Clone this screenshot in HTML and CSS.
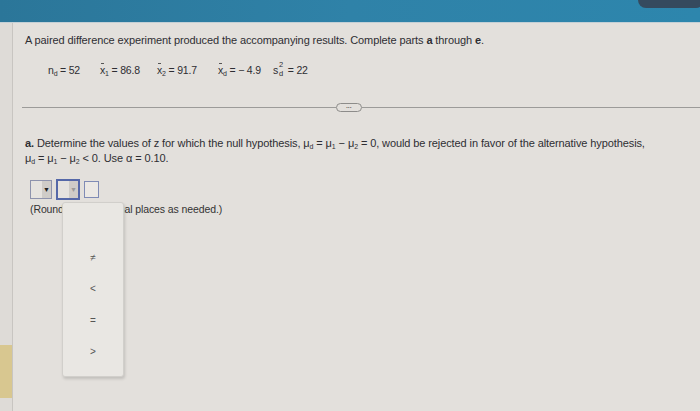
FILE: index.html
```html
<!DOCTYPE html>
<html>
<head>
<meta charset="utf-8">
<link rel="stylesheet" href="styles.css">
</head>
<body>
<div class="topbar"><div class="pill"></div></div>
<div class="main">
  <div class="sidebar"><div class="yellow"></div></div>
  <div class="content">
    <p class="intro">A paired difference experiment produced the accompanying results. Complete parts <b>a</b> through <b>e</b>.</p>
    <div class="vars">
      <span class="v v1">n<sub>d</sub> = 52</span>
      <span class="v v2"><span class="bar">x</span><sub>1</sub> = 86.8</span>
      <span class="v v3"><span class="bar">x</span><sub>2</sub> = 91.7</span>
      <span class="v v4"><span class="bar">x</span><sub>d</sub> = − 4.9</span>
      <span class="v v5">s<span class="supsub"><span class="sp">2</span><span class="sb">d</span></span> = 22</span>
    </div>
    <div class="divider"><span class="line"></span><span class="dots">•••</span><span class="line"></span></div>
    <p class="parta"><b>a.</b> Determine the values of z for which the null hypothesis, μ<sub>d</sub> = μ<sub>1</sub> − μ<sub>2</sub> = 0, would be rejected in favor of the alternative hypothesis,<br>μ<sub>d</sub> = μ<sub>1</sub> − μ<sub>2</sub> &lt; 0. Use α = 0.10.</p>
    <div class="answer">
      <div class="controls">
        <div class="sel"><span class="arrow">▼</span></div>
        <div class="sel active"><span class="arrow dim">▼</span></div>
        <div class="box"></div>
      </div>
      <p class="round">(Round to two decimal places as needed.)</p>
      <div class="menu">
        <div class="item">≠</div>
        <div class="item">&lt;</div>
        <div class="item">=</div>
        <div class="item">&gt;</div>
      </div>
    </div>
  </div>
</div>
</body>
</html>
```
FILE: styles.css
```css
html, body {
  margin: 0;
  padding: 0;
}
body {
  width: 700px;
  height: 411px;
  overflow: hidden;
  background: #e3e0dc;
  font-family: "Liberation Sans", Arial, sans-serif;
  color: #2e2e33;
}
.topbar {
  height: 22px;
  background: linear-gradient(90deg, #2b7699 0%, #2f82a8 50%, #2d86ad 100%);
  border-bottom: 1px solid #c4d0d6;
  display: flex;
  justify-content: flex-end;
  overflow: hidden;
}
.pill {
  width: 66px;
  height: 18px;
  margin-top: -10px;
  margin-right: -4px;
  border-radius: 8px;
  background: #354a5e;
}
.main {
  display: flex;
  height: 388px;
}
.sidebar {
  width: 12px;
  border-right: 1px solid #c8c5c1;
  background: #dedbd7;
  padding-top: 322px;
}
.yellow {
  height: 53px;
  background: #d8c790;
  margin-left: -2px;
}
.content {
  flex: 1;
  padding-left: 12px;
  position: relative;
}
.intro {
  margin: 10px 0 0 0;
  font-size: 11px;
  letter-spacing: -0.1px;
  line-height: 14px;
}
.vars {
  margin-top: 17px;
  padding-left: 23px;
  display: flex;
  font-size: 10.5px;
  height: 16px;
  align-items: baseline;
  letter-spacing: -0.2px;
}
.v sub {
  font-size: 7px;
  vertical-align: -2px;
}
.v1 { width: 52px; }
.v2 { width: 57px; }
.v3 { width: 61px; }
.v4 { width: 55px; }
.bar {
  position: relative;
}
.bar::before {
  content: "";
  position: absolute;
  left: 1px;
  top: -1px;
  width: 3px;
  height: 1px;
  background: #555;
}
.supsub {
  display: inline-block;
  position: relative;
  width: 6px;
  height: 10px;
  margin-left: 1px;
}
.sp, .sb {
  position: absolute;
  left: 0;
  font-size: 7.5px;
  line-height: 7px;
}
.sp { top: -3px; }
.sb { top: 6px; }
.divider {
  margin-top: 22px;
  margin-left: -3px;
  display: flex;
  align-items: center;
  height: 10px;
}
.line {
  height: 1px;
  background: #9c9b99;
}
.line:first-child { width: 314px; }
.line:last-child { flex: 1; }
.dots {
  width: 24px;
  height: 7px;
  border: 1px solid #8d8c8a;
  border-radius: 5px;
  font-size: 4px;
  line-height: 7px;
  text-align: center;
  color: #555;
  letter-spacing: 0.5px;
}
.parta {
  margin: 24px 0 0 0;
  font-size: 11px;
  line-height: 15px;
  letter-spacing: -0.1px;
}
.parta sub {
  font-size: 7px;
  vertical-align: -2px;
  line-height: 0;
}
.answer {
  position: relative;
  margin-top: 13px;
  padding-left: 5px;
}
.controls {
  display: flex;
  gap: 4px;
  align-items: center;
}
.sel {
  width: 20px;
  height: 17px;
  border: 1px solid #8e93ad;
  background: #e6e3df;
  display: flex;
  justify-content: flex-end;
}
.sel .arrow {
  width: 9px;
  background: #cfccc8;
  font-size: 7px;
  line-height: 17px;
  text-align: center;
  color: #222;
}
.sel .arrow.dim {
  color: #9a9a9a;
}
.sel.active {
  border: 2px solid #5568a8;
  width: 20px;
  height: 17px;
}
.box {
  width: 13px;
  height: 15px;
  border: 1px solid #7f8bb5;
  background: #ebe8e4;
}
.round {
  margin: 3px 0 0 0;
  font-size: 10.5px;
  color: #333;
  letter-spacing: -0.1px;
}
.menu {
  position: absolute;
  left: 37px;
  top: 23px;
  width: 62px;
  height: 175px;
  background: #e9e7e3;
  border: 1px solid #d1cfcb;
  border-radius: 3px;
  box-shadow: 1px 2px 3px rgba(0,0,0,0.15);
  box-sizing: border-box;
  padding-top: 48px;
  display: flex;
  flex-direction: column;
  align-items: center;
}
.item {
  height: 32.5px;
  font-size: 10px;
  color: #555;
  line-height: 14px;
  text-align: center;
}
```
